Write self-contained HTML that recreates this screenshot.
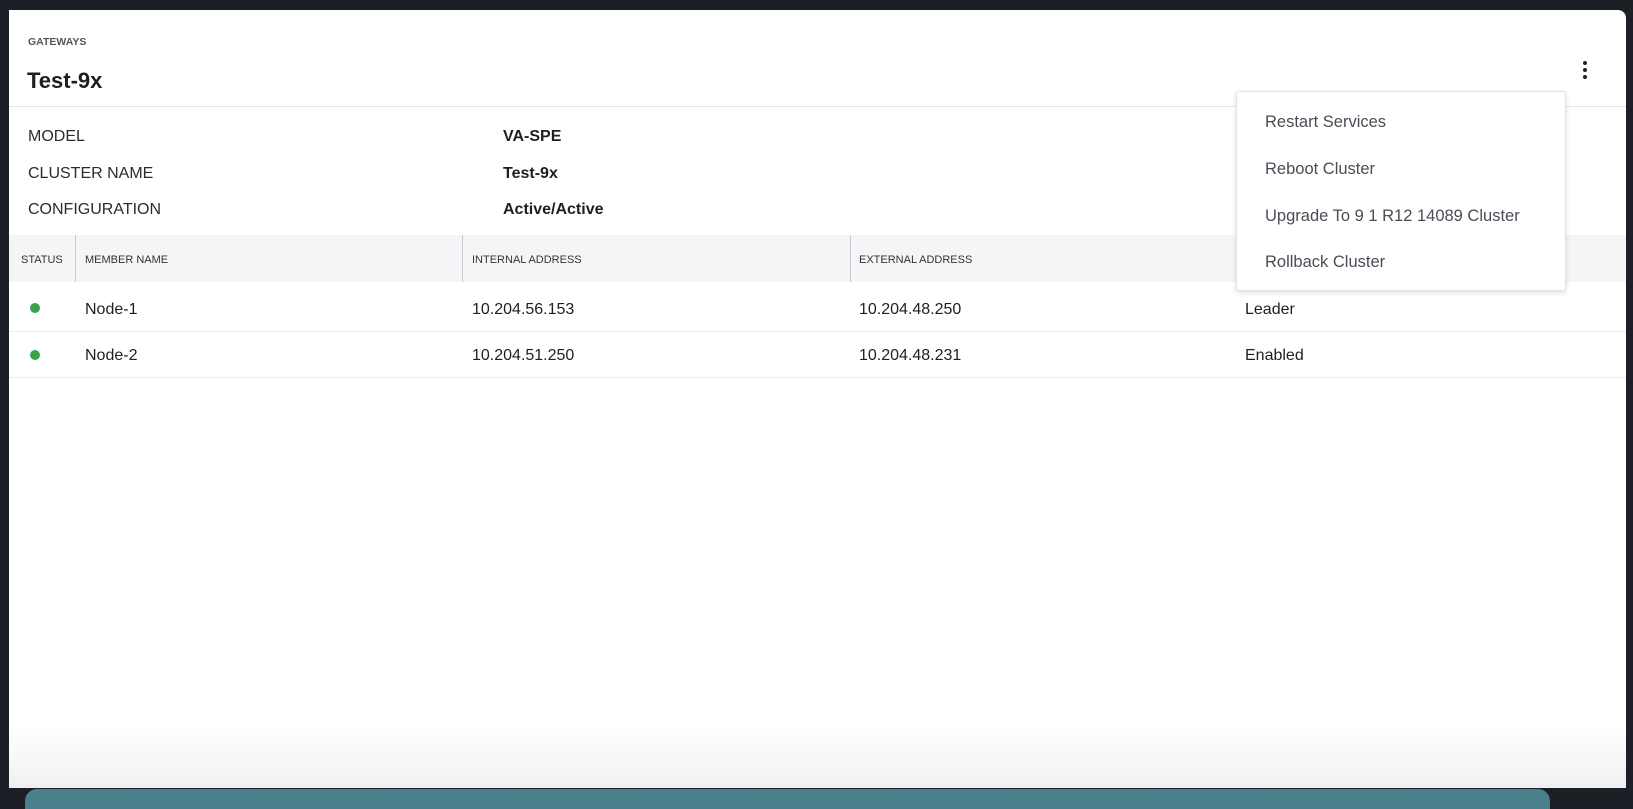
<!DOCTYPE html>
<html><head><meta charset="utf-8"><style>
*{margin:0;padding:0;box-sizing:border-box}
body{width:1633px;height:796px;background:#1c1f26;position:relative;overflow:hidden;font-family:"Liberation Sans",sans-serif;color:#1d1f24}
.teal{position:absolute;left:25px;top:789px;width:1525px;height:20px;background:#4a7f8c;border-radius:12px 12px 0 0}
.panel{position:absolute;left:9px;top:10px;width:1617px;height:778px;background:#fff;border-radius:0 8px 0 0;overflow:hidden}
.fade{position:absolute;left:0;right:0;bottom:0;height:60px;background:linear-gradient(#fff,#f0f0f2)}
.t{position:absolute;white-space:nowrap}
.lbl{font-size:16px;color:#2a2c30}
.val{font-size:16px;font-weight:bold}
.hdr{position:absolute;left:0;top:225px;width:100%;height:47px;background:#f5f5f7}
.hc{font-size:11px;color:#333;top:244px}
.vd{position:absolute;top:225px;width:1px;height:47px;background:#c8cad0}
.cell{font-size:16px;top:291px}
.row2{top:337px}
.line{position:absolute;left:0;width:100%;height:1px;background:#ececee}
.dot{position:absolute;width:10px;height:10px;border-radius:50%;background:#3aa34a}
.menu{position:absolute;left:1227px;top:81px;width:330px;height:200px;background:#fff;border:1px solid #dfe2e8;border-radius:3px;box-shadow:0 2px 6px rgba(0,0,0,.12)}
.mi{position:absolute;left:28px;font-size:16.5px;color:#4a4d55;white-space:nowrap}
.k{position:absolute;left:1574px;width:4px;height:4px;border-radius:50%;background:#222}
</style></head><body>
<div class="teal"></div>
<div class="panel">
<div class="t" style="left:19px;top:26px;font-size:10.5px;font-weight:bold;color:#555">GATEWAYS</div>
<div class="t" style="left:18px;top:58px;font-size:22px;font-weight:bold">Test-9x</div>
<div class="k" style="top:51px"></div><div class="k" style="top:58px"></div><div class="k" style="top:65px"></div>
<div class="line" style="top:96px;background:#e2e5ea"></div>
<div class="t lbl" style="left:19px;top:118px">MODEL</div>
<div class="t lbl" style="left:19px;top:155px">CLUSTER NAME</div>
<div class="t lbl" style="left:19px;top:191px">CONFIGURATION</div>
<div class="t val" style="left:494px;top:118px">VA-SPE</div>
<div class="t val" style="left:494px;top:155px">Test-9x</div>
<div class="t val" style="left:494px;top:191px">Active/Active</div>
<div class="hdr"></div>
<div class="vd" style="left:66px"></div><div class="vd" style="left:453px"></div><div class="vd" style="left:841px"></div>
<div class="t hc" style="left:12px">STATUS</div>
<div class="t hc" style="left:76px">MEMBER NAME</div>
<div class="t hc" style="left:463px">INTERNAL ADDRESS</div>
<div class="t hc" style="left:850px">EXTERNAL ADDRESS</div>
<div class="dot" style="left:21px;top:293px"></div>
<div class="t cell" style="left:76px">Node-1</div>
<div class="t cell" style="left:463px">10.204.56.153</div>
<div class="t cell" style="left:850px">10.204.48.250</div>
<div class="t cell" style="left:1236px">Leader</div>
<div class="line" style="top:321px"></div>
<div class="dot" style="left:21px;top:340px"></div>
<div class="t cell row2" style="left:76px">Node-2</div>
<div class="t cell row2" style="left:463px">10.204.51.250</div>
<div class="t cell row2" style="left:850px">10.204.48.231</div>
<div class="t cell row2" style="left:1236px">Enabled</div>
<div class="line" style="top:367px"></div>
<div class="fade"></div>
<div class="menu">
<div class="mi" style="top:21px">Restart Services</div>
<div class="mi" style="top:68px">Reboot Cluster</div>
<div class="mi" style="top:115px">Upgrade To 9 1 R12 14089 Cluster</div>
<div class="mi" style="top:161px">Rollback Cluster</div>
</div>
</div>
</body></html>
